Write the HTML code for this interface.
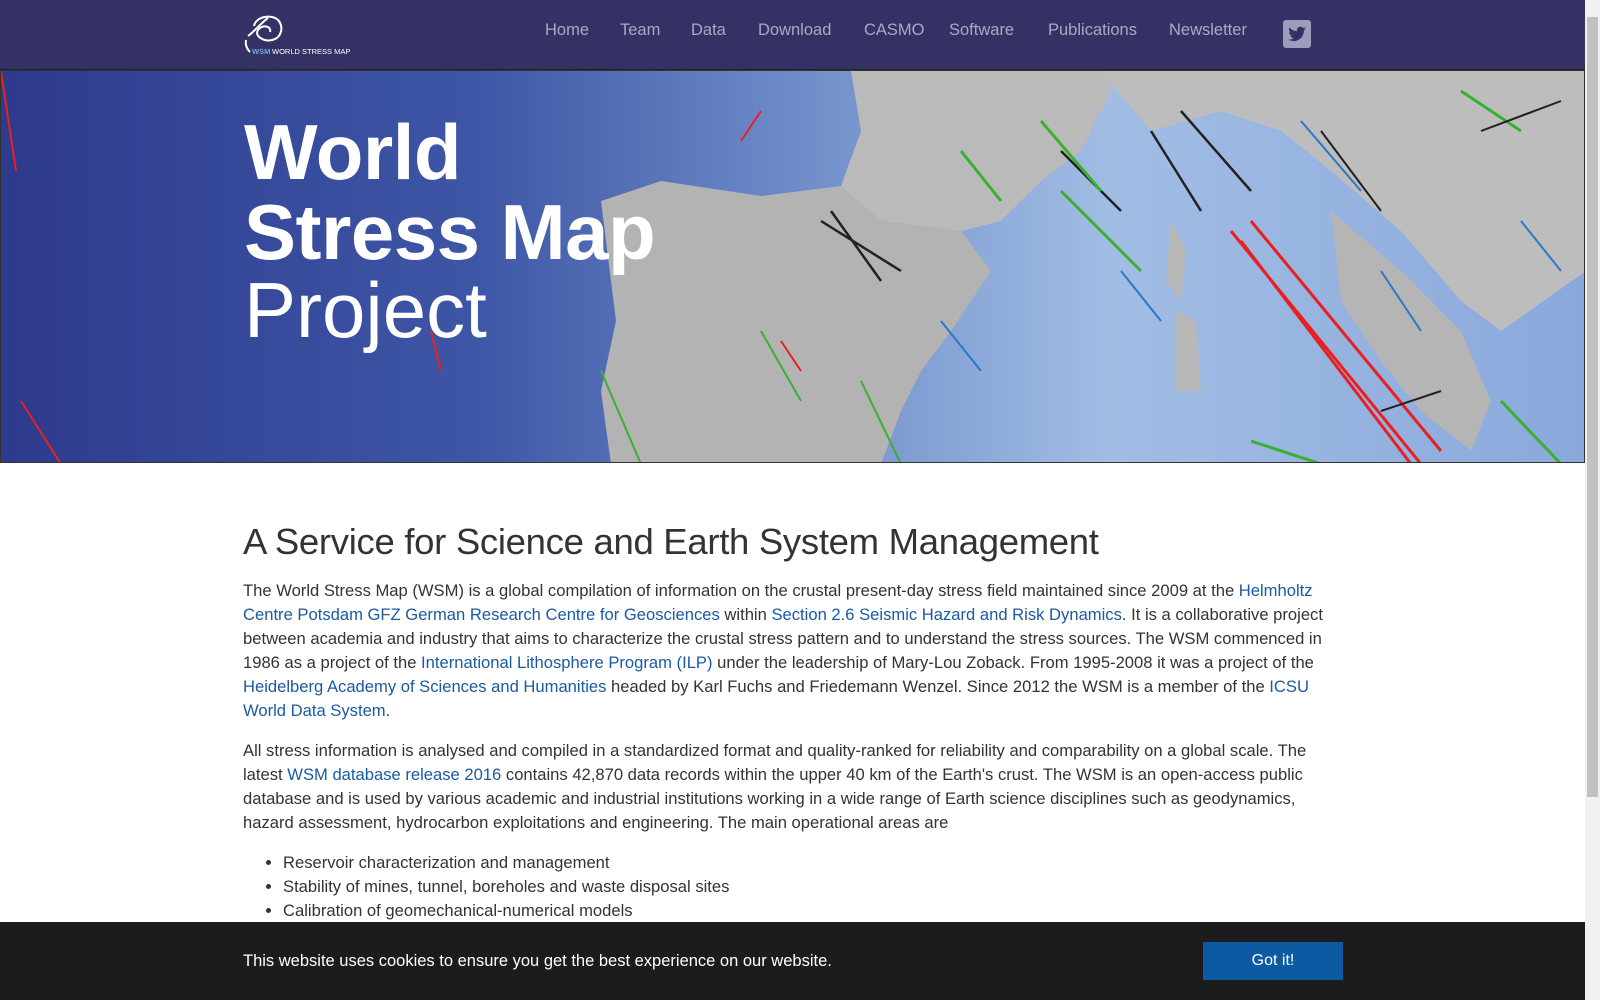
<!DOCTYPE html>
<html><head><meta charset="utf-8"><style>
*{margin:0;padding:0;box-sizing:border-box}
html,body{width:1600px;height:1000px;overflow:hidden;background:#fff;font-family:"Liberation Sans",sans-serif}
.nav{position:absolute;left:0;top:0;width:1585px;height:70px;background:#343264;border-bottom:1px solid #222}
.nav a{position:absolute;top:21px;color:#a9a9c4;font-size:16.5px;text-decoration:none}
.tw{position:absolute;left:1283px;top:20px;width:28px;height:28px;background:#9c9cbc;border-radius:3px}
.hero{position:absolute;left:0;top:70px;width:1585px;height:393px;border:1px solid #333;overflow:hidden}
.title{position:absolute;left:243px;color:#fff;font-weight:bold;font-size:78px;letter-spacing:-0.5px;line-height:80px}
.main{position:absolute;left:243px;top:0;width:1100px;color:#333}
h1{position:absolute;top:521px;font-weight:300;font-size:36.5px;color:#333;white-space:nowrap;letter-spacing:-0.3px}
p{font-size:16.6px;line-height:24px;color:#333}
a.l{color:#1b5aa0;text-decoration:none}
ul{font-size:16.6px;line-height:24px;margin-left:40px}
.cookie{position:absolute;left:0;top:922px;width:1585px;height:78px;background:#1c1c1c;color:#fff}
.sb{position:absolute;left:1585px;top:0;width:15px;height:1000px;background:#f1f1f1}
</style></head><body>
<div class="nav">
<svg style="position:absolute;left:242px;top:12px" width="112" height="45" viewBox="0 0 112 45">
<path d="M12 14 C14 4,30 2,36 8 C42 14,40 26,30 28 C22 30,12 24,16 18 C20 12,30 14,28 20" fill="none" stroke="#fff" stroke-width="2"/>
<path d="M6 24 C12 20,20 10,26 6 M4 28 C3 34,6 38,8 40" fill="none" stroke="#fff" stroke-width="2"/>
<text x="10" y="42" font-size="7.5" fill="#6fa6e0" font-weight="bold" font-family="Liberation Sans">WSM</text>
<text x="30" y="42" font-size="7.5" fill="#fff" font-family="Liberation Sans">WORLD STRESS MAP</text>
</svg>
<a style="left:545px">Home</a><a style="left:620px">Team</a><a style="left:691px">Data</a><a style="left:758px">Download</a><a style="left:864px">CASMO</a><a style="left:949px">Software</a><a style="left:1048px">Publications</a><a style="left:1169px">Newsletter</a>
<div class="tw"><svg width="28" height="28" viewBox="0 0 28 28"><path d="M23 8.5c-.7.3-1.4.5-2.1.6.8-.5 1.3-1.2 1.6-2-.7.4-1.5.7-2.3.9a3.6 3.6 0 0 0-6.2 3.3c-3-.2-5.700-1.600-7.500-3.800-1 1.700-.5 3.800 1.100 4.900-.6 0-1.200-.2-1.600-.5 0 1.800 1.200 3.300 2.900 3.600-.5.100-1.100.200-1.600.100.500 1.500 1.900 2.500 3.400 2.500A7.300 7.300 0 0 1 5 19.500 10.300 10.300 0 0 0 20.900 10.300c.8-.5 1.500-1.100 2.100-1.800z" fill="#343264"/></svg></div>
</div>
<div class="hero">
<svg width="1585" height="393" viewBox="0 0 1585 393" preserveAspectRatio="none">
<defs><linearGradient id="g" x1="0" x2="1" y1="0" y2="0"><stop offset="0" stop-color="#2e3a8c"/><stop offset="0.3" stop-color="#3e56a6"/><stop offset="0.5" stop-color="#6d8cc8"/><stop offset="0.7" stop-color="#a2bde4"/><stop offset="1" stop-color="#8aa8dc"/></linearGradient></defs>
<rect width="1585" height="393" fill="url(#g)"/>
<path d="M600 130 L660 110 L760 125 L840 115 L880 150 L960 160 L990 200 L950 260 L920 300 L900 340 L880 393 L610 393 L600 320 L615 250 Z" fill="#b3b3b3"/>
<path d="M850 0 L1120 0 L1080 80 L1040 110 L1000 150 L960 160 L880 150 L840 115 L860 60 Z" fill="#bababa"/>
<path d="M1100 0 L1585 0 L1585 200 L1500 260 L1460 230 L1400 160 L1330 100 L1280 60 L1220 40 L1150 60 Z" fill="#bdbdbd"/>
<path d="M1330 140 L1400 200 L1460 260 L1490 330 L1470 380 L1420 340 L1380 290 L1340 230 Z" fill="#b5b5b5"/>
<path d="M1170 150 L1185 180 L1180 230 L1165 210 Z M1175 240 L1195 250 L1200 320 L1175 320 Z" fill="#b8b8b8"/>
<g stroke-width="1.5" fill="none">
<path d="M1230 160 L1420 393 M1240 170 L1410 393 M1250 150 L1440 380" stroke="#e82020" stroke-width="3"/>
<path d="M1150 60 L1200 140 M1180 40 L1250 120 M1060 80 L1120 140 M820 150 L900 200 M830 140 L880 210" stroke="#222" stroke-width="2.5"/>
<path d="M1040 50 L1100 120 M1060 120 L1140 200 M1500 330 L1560 393 M1250 370 L1320 393 M1460 20 L1520 60 M960 80 L1000 130" stroke="#3ab030" stroke-width="3"/>
<path d="M1300 50 L1360 120 M1380 200 L1420 260 M1120 200 L1160 250 M940 250 L980 300 M1520 150 L1560 200" stroke="#2a78c8" stroke-width="2"/>
<path d="M1320 60 L1380 140 M1480 60 L1560 30 M1380 340 L1440 320" stroke="#222" stroke-width="2"/>
<path d="M0 0 L15 100 M20 330 L60 393 M780 270 L800 300 M740 70 L760 40 M430 260 L440 300" stroke="#e82020" stroke-width="2"/>
<path d="M760 260 L800 330 M600 300 L640 393 M860 310 L900 393" stroke="#3ab030" stroke-width="2"/>
</g>
</svg>
<div class="title" style="top:41px">World</div>
<div class="title" style="top:121px">Stress Map</div>
<div class="title" style="top:199px;font-weight:300;letter-spacing:0">Project</div>
</div>
<div class="main">
<h1>A Service for Science and Earth System Management</h1>
<div style="position:absolute;top:579px;width:1100px">
<p>The World Stress Map (WSM) is a global compilation of information on the crustal present-day stress field maintained since 2009 at the <a class="l">Helmholtz Centre Potsdam GFZ German Research Centre for Geosciences</a> within <a class="l">Section 2.6 Seismic Hazard and Risk Dynamics</a>. It is a collaborative project between academia and industry that aims to characterize the crustal stress pattern and to understand the stress sources. The WSM commenced in 1986 as a project of the <a class="l">International Lithosphere Program (ILP)</a> under the leadership of Mary-Lou Zoback. From 1995-2008 it was a project of the <a class="l">Heidelberg Academy of Sciences and Humanities</a> headed by Karl Fuchs and Friedemann Wenzel. Since 2012 the WSM is a member of the <a class="l">ICSU World Data System</a>.</p>
<p style="margin-top:16px">All stress information is analysed and compiled in a standardized format and quality-ranked for reliability and comparability on a global scale. The latest <a class="l">WSM database release 2016</a> contains 42,870 data records within the upper 40 km of the Earth's crust. The WSM is an open-access public database and is used by various academic and industrial institutions working in a wide range of Earth science disciplines such as geodynamics, hazard assessment, hydrocarbon exploitations and engineering. The main operational areas are</p>
<ul style="margin-top:16px"><li>Reservoir characterization and management</li><li>Stability of mines, tunnel, boreholes and waste disposal sites</li><li>Calibration of geomechanical-numerical models</li><li>Seismic hazard assessment</li></ul>
</div>
</div>
<div class="cookie">
<div style="position:absolute;left:243px;top:30px;font-size:16.5px">This website uses cookies to ensure you get the best experience on our website.</div>
<div style="position:absolute;left:1203px;top:20px;width:140px;height:38px;background:#0b5aa2;text-align:center;line-height:38px;font-size:16px">Got it!</div>
</div>
<div class="sb"><div style="position:absolute;left:2px;top:17px;width:11px;height:780px;background:#c1c1c1"></div></div>
</body></html>
